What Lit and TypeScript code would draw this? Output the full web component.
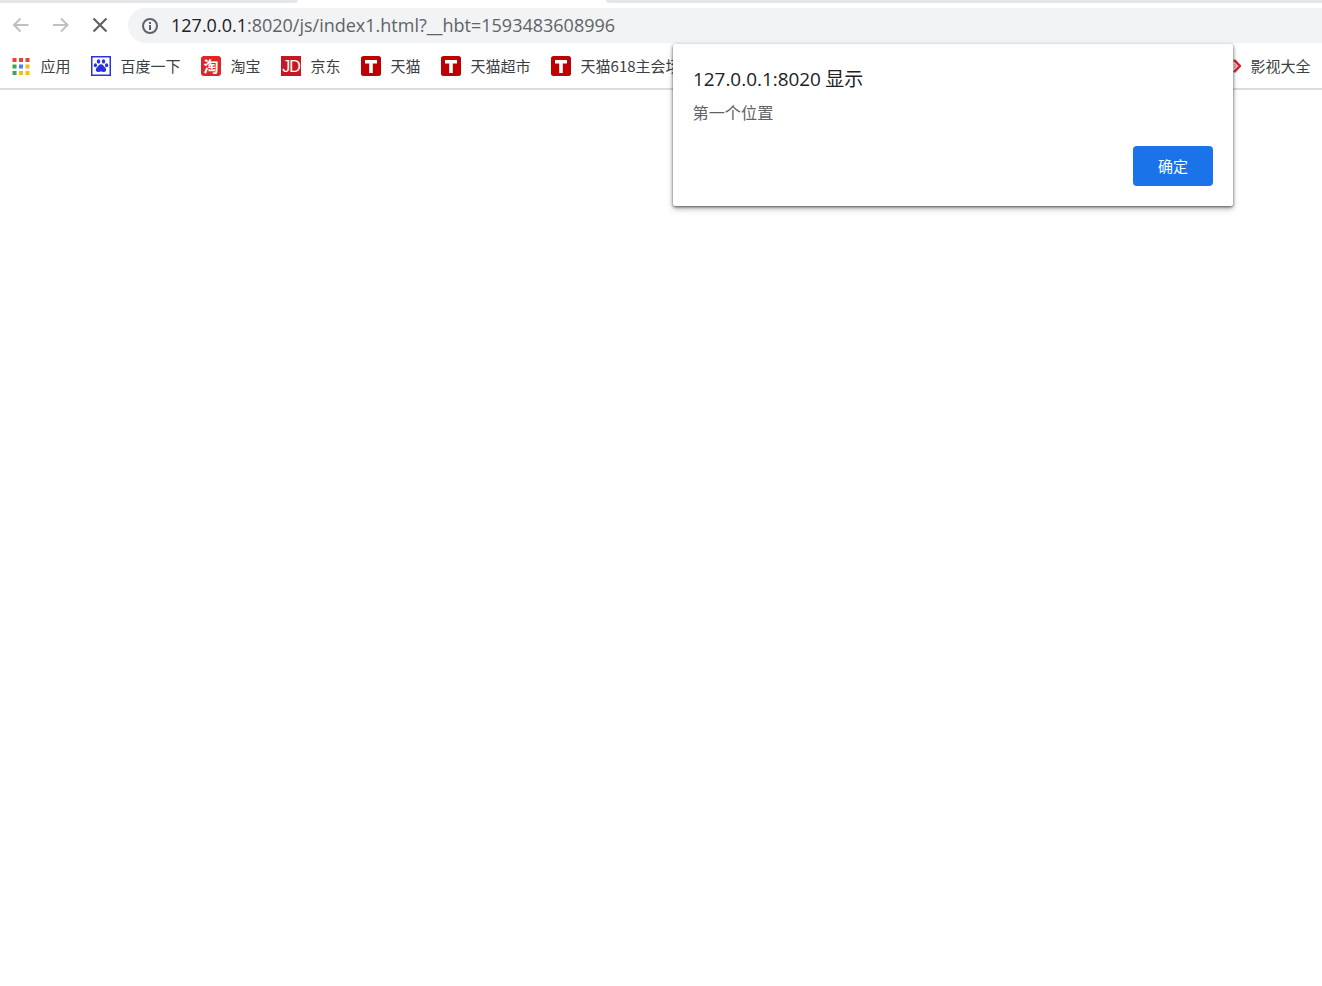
import { LitElement, html, css, svg } from "lit";
import { customElement } from "lit/decorators.js";

const T = html`<svg class="ic" viewBox="0 0 20 20"><rect width="20" height="20" rx="2.5" fill="#c00000"/><path d="M4 4h12v3.400h-4.200V17H8.200V7.400H4z" fill="#fff"/></svg>`;

const apps = html`<svg class="ic" viewBox="0 0 20 20">${[
  [1.5, 2, "#ea4335"], [8, 2, "#ea4335"], [14.5, 2, "#ea4335"],
  [1.5, 8.5, "#34a853"], [8, 8.5, "#4285f4"], [14.5, 8.5, "#fbbc05"],
  [1.5, 15, "#34a853"], [8, 15, "#fbbc05"], [14.5, 15, "#fbbc05"],
].map(([x, y, c]) => svg`<rect x=${x} y=${y} width="4" height="4" fill=${c}/>`)}</svg>`;

const baidu = html`<svg class="ic" viewBox="0 0 20 20"><rect x=".75" y=".75" width="18.500" height="18.500" fill="#fff" stroke="#2932e1" stroke-width="1.500"/><g fill="#2932e1"><ellipse cx="7.500" cy="5.400" rx="1.700" ry="2.200"/><ellipse cx="12.500" cy="5.400" rx="1.700" ry="2.200"/><ellipse cx="4.400" cy="9.300" rx="1.600" ry="2"/><ellipse cx="15.600" cy="9.300" rx="1.600" ry="2"/><path d="M10 8.200c-2.200 0-2.800 2.200-4.100 3.400-1.500 1.400-1.600 4.400 1.300 4.400 1.100 0 1.700-.5 2.800-.5s1.700.5 2.800.5c2.900 0 2.800-3 1.300-4.400C12.800 10.400 12.200 8.200 10 8.200z"/></g></svg>`;

const taobao = html`<svg class="ic" viewBox="0 0 20 20"><rect width="20" height="20" rx="3" fill="#dd2727"/><text class="tb" x="10" y="15.500" text-anchor="middle">淘</text></svg>`;

const jd = html`<svg class="ic" viewBox="0 0 20 20"><rect width="20" height="20" fill="#c91623"/><text class="jd" x="10" y="16" text-anchor="middle">JD</text></svg>`;

const red = html`<svg class="ic" viewBox="0 0 20 20"><path d="M13 4l6 6-6 6" fill="none" stroke="#cf2a36" stroke-width="2.600"/><path d="M13 8l2 2-2 2" fill="none" stroke="#e58a92" stroke-width="1.500"/></svg>`;

const items = [
  { icon: apps, label: "应用" },
  { icon: baidu, label: "百度一下" },
  { icon: taobao, label: "淘宝" },
  { icon: jd, label: "京东" },
  { icon: T, label: "天猫" },
  { icon: T, label: "天猫超市" },
  { icon: T, label: "天猫618主会场" },
];

@customElement("app-root")
export class AppRoot extends LitElement {
  static styles = css`
    :host {
      display: block;
      position: relative;
      height: 986px;
      background: #fff;
      font-family: "Noto Sans CJK SC", "Liberation Sans", sans-serif;
      overflow: hidden;
    }
    .tabstrip { display: flex; height: 3px; background: #fff; }
    .strip-l { width: 298px; background: #e3e5e9; border-bottom-right-radius: 3px; }
    .strip-m { width: 308px; }
    .strip-r { flex: 1; background: #e3e5e9; border-bottom-left-radius: 3px; }
    .nav { display: flex; align-items: flex-start; height: 41px; box-sizing: border-box; padding-top: 5px; }
    .navbtn { width: 20px; height: 20px; display: block; flex: none; margin-top: 7px; }
    .back { margin-left: 11px; }
    .fwd { margin-left: 20px; }
    .stop { margin-left: 19px; }
    .omni {
      margin-left: 18px;
      flex: 1;
      height: 35px;
      border-radius: 17.5px 0 0 17.5px;
      background: #f1f3f4;
      display: flex;
      align-items: center;
      padding-left: 13px;
      box-sizing: border-box;
    }
    .info { width: 18px; height: 18px; flex: none; }
    .url {
      margin-left: 12px;
      font: 18px "Open Sans", sans-serif;
      color: #5f6368;
      white-space: nowrap;
      line-height: 34px;
      height: 35px;
    }
    .host { color: #202124; }
    .bar {
      display: flex;
      align-items: center;
      gap: 20px;
      height: 46px;
      box-sizing: border-box;
      padding: 0 11px 0 11px;
      border-bottom: 2px solid #dadce0;
      overflow: hidden;
    }
    .bm {
      display: flex;
      align-items: center;
      gap: 9.5px;
      flex: none;
      font-size: 15px;
      line-height: 20px;
      color: #3c4043;
      white-space: nowrap;
    }
    .bm span { padding-right: .5px; }
    .spacer { flex: 1; min-width: 0; }
    .ic { width: 20px; height: 20px; display: block; flex: none; }
    .tb { font: 700 15px "Noto Sans CJK SC", sans-serif; fill: #fff; }
    .jd { font: 400 16px "Liberation Sans", sans-serif; letter-spacing: -1px; fill: #fff; }
    .dialog {
      position: absolute;
      left: 673px;
      top: 44px;
      width: 560px;
      height: 162px;
      box-sizing: border-box;
      padding: 20px;
      background: #fff;
      border-radius: 2px;
      box-shadow: 0 1px 3px rgba(0,0,0,.6), 0 3px 6px rgba(0,0,0,.25);
      display: flex;
      flex-direction: column;
    }
    .title { font-size: 19px; line-height: 30px; color: #202124; margin-top: -1px; }
    .title span { font-family: "Open Sans", sans-serif; font-size: 18.9px; }
    .msg { margin-top: 6px; font-size: 16.2px; line-height: 24px; color: #5f6368; margin-left: -.5px; }
    .actions { margin-top: auto; display: flex; justify-content: flex-end; }
    .ok {
      width: 80px;
      height: 40px;
      border: 0;
      border-radius: 4px;
      background: #1a73e8;
      color: #fff;
      font: 15px/38px "Noto Sans CJK SC", sans-serif;
      padding: 0 0 1px;
    }
  `;

  render() {
    return html`
      <div class="tabstrip"><div class="strip-l"></div><div class="strip-m"></div><div class="strip-r"></div></div>
      <div class="nav">
        <svg class="navbtn back" viewBox="0 0 20 20"><path d="M17.500 10H3M9.500 3.500L3 10l6.500 6.500" fill="none" stroke="#bdc1c6" stroke-width="2"/></svg>
        <svg class="navbtn fwd" viewBox="0 0 20 20"><path d="M2 10h14.500M10 3.500l6.500 6.500-6.500 6.500" fill="none" stroke="#bdc1c6" stroke-width="2"/></svg>
        <svg class="navbtn stop" viewBox="0 0 20 20"><path d="M3.500 3.500l13 13M16.500 3.500l-13 13" fill="none" stroke="#5f6368" stroke-width="2.200"/></svg>
        <div class="omni">
          <svg class="info" viewBox="0 0 18 18"><circle cx="9" cy="9" r="7" fill="none" stroke="#5f6368" stroke-width="2"/><path d="M8 8h2v5H8zM8 5h2v2H8z" fill="#5f6368"/></svg>
          <div class="url"><span class="host">127.0.0.1</span>:8020/js/index1.html?__hbt=1593483608996</div>
        </div>
      </div>
      <div class="bar">
        ${items.map((i) => html`<div class="bm">${i.icon}<span>${i.label}</span></div>`)}
        <div class="spacer"></div>
        <div class="bm">${red}<span>影视大全</span></div>
      </div>
      <div class="dialog">
        <div class="title"><span>127.0.0.1:8020</span> 显示</div>
        <div class="msg">第一个位置</div>
        <div class="actions"><button class="ok">确定</button></div>
      </div>
    `;
  }
}
